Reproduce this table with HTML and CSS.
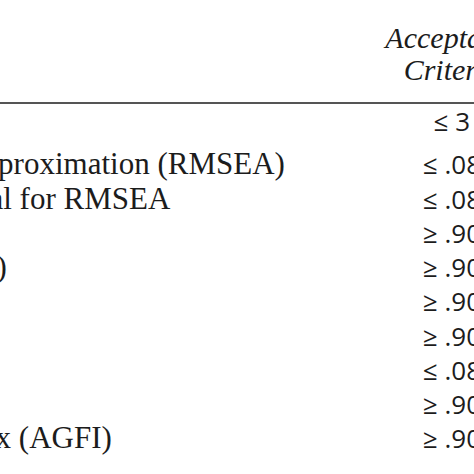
FILE: index.html
```html
<!DOCTYPE html>
<html lang="en">
<head>
    <meta charset="UTF-8">
    <meta name="viewport" content="width=device-width, initial-scale=1.0">
    <title>Model Fit Indices</title>
    <link rel="stylesheet" href="styles.css">
</head>
<body>
    <table class="fit-table">
        <thead>
            <tr>
                <th class="index-col"></th>
                <th class="criteria-col">Acceptable<br>Criteria</th>
            </tr>
        </thead>
        <tbody>
            <tr class="first-row">
                <td>Chi-square/df (&chi;<sup>2</sup>/df)</td>
                <td class="value">&le; 3</td>
            </tr>
            <tr>
                <td>Root Mean Square Error of Approximation (RMSEA)</td>
                <td class="value">&le; .08</td>
            </tr>
            <tr>
                <td>Upper 90% Confidence Interval for RMSEA</td>
                <td class="value">&le; .08</td>
            </tr>
            <tr>
                <td>Normed Fit Index (NFI)</td>
                <td class="value">&ge; .90</td>
            </tr>
            <tr>
                <td>Non&ndash;Normed Fit Index (NNFI)</td>
                <td class="value">&ge; .90</td>
            </tr>
            <tr>
                <td>Tucker&ndash;Lewis Index (TLI)</td>
                <td class="value">&ge; .90</td>
            </tr>
            <tr>
                <td>Comparative Fit (CFI)</td>
                <td class="value">&ge; .90</td>
            </tr>
            <tr>
                <td>Standardized RMR (SRMR)</td>
                <td class="value">&le; .08</td>
            </tr>
            <tr>
                <td>Relative Fit Index (RFI)</td>
                <td class="value">&ge; .90</td>
            </tr>
            <tr>
                <td>Adjusted Goodness of Fit Index (AGFI)</td>
                <td class="value">&ge; .90</td>
            </tr>
        </tbody>
    </table>
</body>
</html>
```

FILE: styles.css
```css
html, body {
    margin: 0;
    padding: 0;
    background: #fff;
    overflow: hidden;
}
body {
    width: 474px;
    height: 474px;
    font-family: "Liberation Serif", "Times New Roman", serif;
    font-size: 31px;
    color: #1c1c1c;
}
.fit-table {
    border-collapse: collapse;
    table-layout: fixed;
    width: 927px;
    margin-left: -398px; /* table is cropped on both sides */
}
.fit-table th,
.fit-table td {
    padding: 0;
    white-space: nowrap;
    vertical-align: middle;
}
.fit-table .index-col {
    width: 773px;
}
.fit-table .criteria-col {
    width: 154px;
}
.fit-table thead th {
    font-weight: normal;
    font-style: italic;
    font-size: 30px;
    line-height: 32px;
    padding: 22px 0 16px;
    text-align: center;
    border-bottom: 2px solid #555;
}
.fit-table tbody td {
    line-height: 34.25px;
    padding-left: 13px;
}
.fit-table tbody .first-row td {
    padding-bottom: 9px;
}
sup {
    font-size: 0.6em;
    line-height: 0;
}
.fit-table td.value {
    text-align: center;
    font-family: "Open Sans", "DejaVu Sans", sans-serif;
    font-size: 26px;
    padding-left: 0;
}
```
